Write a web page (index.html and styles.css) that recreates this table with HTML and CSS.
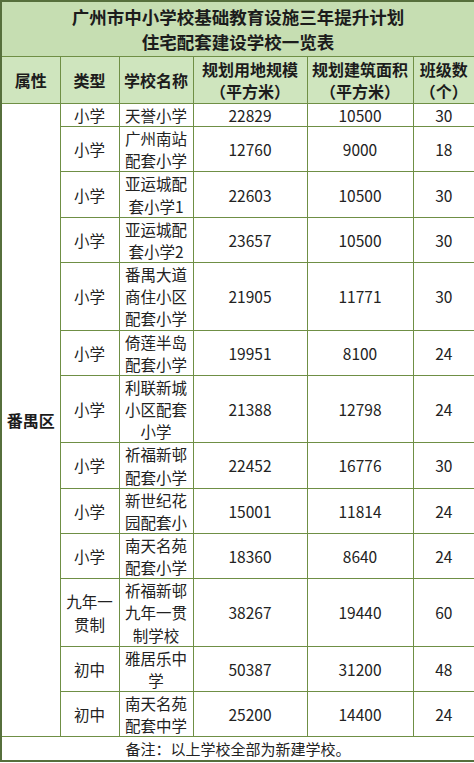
FILE: index.html
```html
<!DOCTYPE html>
<html lang="zh-CN">
<head>
<meta charset="utf-8">
<link rel="stylesheet" href="styles.css">
</head>
<body>
<table class="sheet">
  <colgroup>
    <col class="c1"><col class="c2"><col class="c3"><col class="c4"><col class="c5"><col class="c6">
  </colgroup>
  <thead>
    <tr><th colspan="6" class="title">广州市中小学校基础教育设施三年提升计划<br>住宅配套建设学校一览表</th></tr>
    <tr class="head">
      <th>属性</th><th>类型</th><th>学校名称</th>
      <th>规划用地规模<br>（平方米）</th><th>规划建筑面积<br>（平方米）</th><th>班级数<br>（个）</th>
    </tr>
  </thead>
  <tbody>
    <tr><td rowspan="13" class="district">番禺区</td><td>小学</td><td>天誉小学</td><td>22829</td><td>10500</td><td>30</td></tr>
    <tr><td>小学</td><td>广州南站<br>配套小学</td><td>12760</td><td>9000</td><td>18</td></tr>
    <tr><td>小学</td><td>亚运城配<br>套小学1</td><td>22603</td><td>10500</td><td>30</td></tr>
    <tr><td>小学</td><td>亚运城配<br>套小学2</td><td>23657</td><td>10500</td><td>30</td></tr>
    <tr><td>小学</td><td>番禺大道<br>商住小区<br>配套小学</td><td>21905</td><td>11771</td><td>30</td></tr>
    <tr><td>小学</td><td>倚莲半岛<br>配套小学</td><td>19951</td><td>8100</td><td>24</td></tr>
    <tr><td>小学</td><td>利联新城<br>小区配套<br>小学</td><td>21388</td><td>12798</td><td>24</td></tr>
    <tr><td>小学</td><td>祈福新邨<br>配套小学</td><td>22452</td><td>16776</td><td>30</td></tr>
    <tr><td>小学</td><td>新世纪花<br>园配套小</td><td>15001</td><td>11814</td><td>24</td></tr>
    <tr><td>小学</td><td>南天名苑<br>配套小学</td><td>18360</td><td>8640</td><td>24</td></tr>
    <tr><td>九年一<br>贯制</td><td>祈福新邨<br>九年一贯<br>制学校</td><td>38267</td><td>19440</td><td>60</td></tr>
    <tr><td>初中</td><td>雅居乐中<br>学</td><td>50387</td><td>31200</td><td>48</td></tr>
    <tr><td>初中</td><td>南天名苑<br>配套中学</td><td>25200</td><td>14400</td><td>24</td></tr>
  </tbody>
  <tfoot>
    <tr><td colspan="6" class="note">备注：以上学校全部为新建学校。</td></tr>
  </tfoot>
</table>
</body>
</html>
```
FILE: styles.css
```css
html, body {
  margin: 0;
  padding: 0;
  background: #ffffff;
}
.sheet {
  width: 474px;
  table-layout: fixed;
  border-collapse: collapse;
  border: 2px solid #566f3c;
  font-family: "Noto Sans CJK SC", "Noto Sans", sans-serif;
  color: #222222;
}
.c1 { width: 59px; }
.c2 { width: 59px; }
.c3 { width: 74px; }
.c4 { width: 114px; }
.c5 { width: 106px; }
.c6 { width: 62px; }
.sheet th, .sheet td {
  border: 1px solid #6f8f45;
  padding: 0;
  text-align: center;
  vertical-align: middle;
}
.sheet td {
  font-size: 15.5px;
  line-height: 22.15px;
  font-weight: normal;
}
.title {
  background: #c6deb2;
  font-size: 17.5px;
  font-weight: bold;
  line-height: 25px;
  height: 54px;
  color: #1c1c1c;
}
.head th {
  background: #cfe5be;
  font-size: 16px;
  font-weight: bold;
  line-height: 22.5px;
  height: 46px;
  color: #1c1c1c;
}
.sheet td.district {
  font-weight: bold;
  font-size: 16px;
  color: #1c1c1c;
}
.sheet td.note {
  font-size: 15px;
  line-height: 22px;
  height: 23px;
}
```
